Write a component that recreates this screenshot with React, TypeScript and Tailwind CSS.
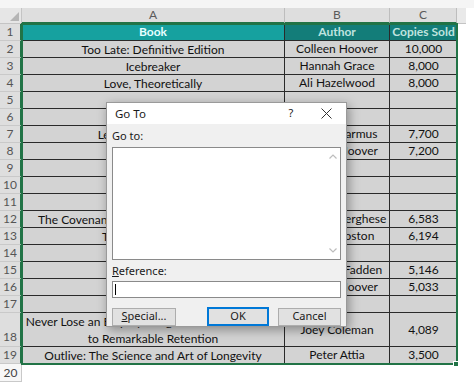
import React from "react";

type Row = { n: number; a?: React.ReactNode; b?: string; c?: string; h?: number };

const ROWS: Row[] = [
  { n: 2, a: "Too Late: Definitive Edition", b: "Colleen Hoover", c: "10,000" },
  { n: 3, a: "Icebreaker", b: "Hannah Grace", c: "8,000" },
  { n: 4, a: "Love, Theoretically", b: "Ali Hazelwood", c: "8,000" },
  { n: 5 },
  { n: 6 },
  { n: 7, a: "Lessons in Chemistry", b: "Bonnie Garmus", c: "7,700" },
  { n: 8, a: "It Starts with Us", b: "Colleen Hoover", c: "7,200" },
  { n: 9 },
  { n: 10 },
  { n: 11 },
  { n: 12, a: "The Covenant of Water (Oprah's Book Club)", b: "Abraham Verghese", c: "6,583" },
  { n: 13, a: "The Seven Year Slip", b: "Ashley Poston", c: "6,194" },
  { n: 14 },
  { n: 15, a: "The Housemaid", b: "Freida McFadden", c: "5,146" },
  { n: 16, a: "Verity", b: "Colleen Hoover", c: "5,033" },
  { n: 17 },
  {
    n: 18,
    h: 34,
    a: (
      <>
        Never Lose an Employee Again: The Proven Path
        <br />
        to Remarkable Retention
      </>
    ),
    b: "Joey Coleman",
    c: "4,089",
  },
  { n: 19, a: "Outlive: The Science and Art of Longevity", b: "Peter Attia", c: "3,500" },
];

const cellFont = { fontFamily: "Lato, 'Liberation Sans', sans-serif" };
const uiFont = { fontFamily: "'Noto Sans', 'Liberation Sans', sans-serif" };

function RowHead({ n, h, selected = true }: { n: number; h: number; selected?: boolean }) {
  return (
    <div
      className={`w-[22px] shrink-0 flex items-center justify-center text-[12px] border-b border-[#c9c9c9] ${
        selected ? "bg-[#dedede] text-[#555] border-r-2 border-r-[#217346]" : "bg-[#f7f7f7] text-[#444] border-r border-r-[#c9c9c9]"
      }`}
      style={{ height: h, ...cellFont }}
    >
      <span className={h > 20 ? "mt-[14px]" : ""}>{n}</span>
    </div>
  );
}

function DataRow({ row }: { row: Row }) {
  const h = row.h ?? 17;
  return (
    <div className="flex" style={{ height: h }}>
      <RowHead n={row.n} h={h} />
      <div className="w-[263px] shrink-0 flex items-center justify-center text-center leading-[17px] bg-[#d3d3d3] border-b border-r border-[#2a2a2a] overflow-hidden whitespace-nowrap text-[#111]">
        <span>{row.a}</span>
      </div>
      <div className="w-[105px] shrink-0 flex items-center justify-center bg-[#d3d3d3] border-b border-r border-[#2a2a2a] overflow-hidden whitespace-nowrap text-[#111]">
        {row.b}
      </div>
      <div className="w-[67px] shrink-0 flex items-center justify-center bg-[#d3d3d3] border-b border-[#2a2a2a] overflow-hidden whitespace-nowrap text-[#111]">
        {row.c}
      </div>
      <div className="flex-1 bg-white" />
    </div>
  );
}

function GoToDialog() {
  return (
    <div
      className="absolute left-[106px] top-[102px] w-[241px] h-[225px] flex flex-col border border-[#9a9a9a] bg-[#f0f0f0] shadow-[2px_3px_10px_rgba(0,0,0,0.35)] text-[11px] text-[#1a1a1a]"
      style={uiFont}
    >
      <div className="h-[25px] bg-white flex items-center pl-[8px] pr-[12px]">
        <span className="flex-1 text-[11.5px]">Go To</span>
        <span className="w-[10px] text-center mr-[25px] text-[11px]">?</span>
        <svg width="11" height="11" viewBox="0 0 11 11" className="mr-[2px]">
          <path d="M0.5 0.5 L10.5 10.5 M10.5 0.5 L0.5 10.5" stroke="#333" strokeWidth="1" fill="none" />
        </svg>
      </div>
      <div className="flex-1 flex flex-col px-[5px] pt-[4px]">
        <div className="h-[16px] leading-[16px]">Go to:</div>
        <div className="mt-[3px] h-[113px] bg-white border border-[#8a8a8a] flex justify-end">
          <div className="w-[15px] flex flex-col items-center justify-between py-[6px]">
            <svg width="8" height="5" viewBox="0 0 8 5">
              <path d="M0.5 4.5 L4 1 L7.5 4.5" stroke="#bdbdbd" strokeWidth="1.2" fill="none" />
            </svg>
            <svg width="8" height="5" viewBox="0 0 8 5">
              <path d="M0.5 0.5 L4 4 L7.5 0.5" stroke="#bdbdbd" strokeWidth="1.2" fill="none" />
            </svg>
          </div>
        </div>
        <div className="mt-[3px] h-[15px] leading-[15px]">
          <span className="underline underline-offset-1">R</span>eference:
        </div>
        <div className="mt-[3px] h-[17px] bg-white border border-[#8a8a8a] flex items-center pl-[2px]">
          <div className="w-px h-[11px] bg-black" />
        </div>
        <div className="mt-[9px] flex items-center">
          <button className="w-[64px] h-[18px] bg-[#e1e1e1] border border-[#adadad] flex items-center justify-center">
            <span>
              <span className="underline underline-offset-1">S</span>pecial...
            </span>
          </button>
          <button className="ml-[31px] w-[62px] h-[19px] bg-[#e1e1e1] border-2 border-[#0078d7] flex items-center justify-center">
            OK
          </button>
          <button className="ml-[9px] w-[63px] h-[18px] bg-[#e1e1e1] border border-[#adadad] flex items-center justify-center">
            Cancel
          </button>
        </div>
      </div>
    </div>
  );
}

export default function App() {
  return (
    <div className="relative w-[474px] h-[382px] overflow-hidden bg-white text-[12px]" style={cellFont}>
      <div className="h-[8px] bg-[#f5f5f5]" />
      {/* column headers */}
      <div className="flex h-[16px] text-[12px] text-[#5a5a5a]">
        <div className="w-[22px] shrink-0 bg-[#e6e6e6] border-r border-b border-[#c4c4c4] flex items-end justify-end p-[2px]">
          <svg width="9" height="9" viewBox="0 0 9 9">
            <path d="M9 0 L9 9 L0 9 Z" fill="#b5b5b5" />
          </svg>
        </div>
        {[
          ["A", "w-[263px]"],
          ["B", "w-[105px]"],
          ["C", "w-[67px]"],
        ].map(([l, w]) => (
          <div key={l} className={`${w} shrink-0 bg-[#dedede] border-r border-[#bdbdbd] border-b-2 border-b-[#217346] flex items-center justify-center`}>
            {l}
          </div>
        ))}
        <div className="w-[9px] bg-[#e9e9e9] border-b border-[#c4c4c4]" />
        <div className="flex-1 bg-white" />
      </div>

      <div className="relative">
        {/* header row */}
        <div className="flex h-[17px]">
          <RowHead n={1} h={17} />
          <div className="w-[263px] shrink-0 flex items-center justify-center font-bold bg-[#16a19f] text-[#e6ffff] border-b border-r border-[#2a2a2a]">
            Book
          </div>
          <div className="w-[105px] shrink-0 flex items-center justify-center font-bold bg-[#137d79] text-[#bfe3df] border-b border-r border-[#2a2a2a]">
            Author
          </div>
          <div className="w-[67px] shrink-0 flex items-center justify-center font-bold bg-[#137d79] text-[#bfe3df] border-b border-[#2a2a2a] whitespace-nowrap overflow-hidden">
            Copies Sold
          </div>
          <div className="flex-1 bg-white" />
        </div>
        {ROWS.map((r) => (
          <DataRow key={r.n} row={r} />
        ))}
        <div className="flex h-[18px]">
          <RowHead n={20} h={18} selected={false} />
          <div className="flex-1 bg-white" />
        </div>

        {/* selection outline */}
        <div className="absolute left-[21px] top-[-1px] w-[437px] h-[342px] border-2 border-[#217346] pointer-events-none" />
        <div className="absolute left-[453px] top-[337px] w-[6px] h-[6px] bg-[#217346] border border-white" />
      </div>

      <GoToDialog />
    </div>
  );
}
